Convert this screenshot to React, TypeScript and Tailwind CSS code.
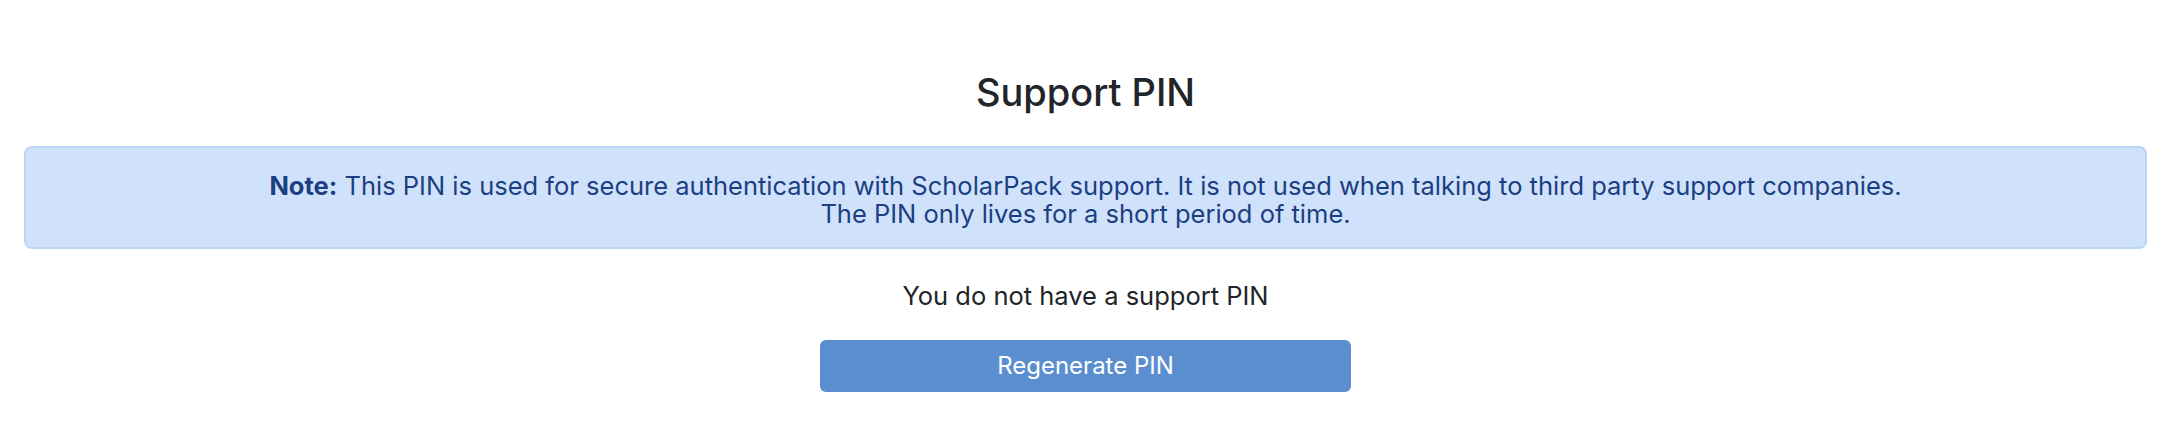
/**
 * Support PIN panel.
 * Shows an info note about the PIN and a button to regenerate it.
 */

export default function App() {
  return (
    <div
      className="min-h-[422px] bg-white pl-6 pr-[29px] pt-[70px] text-[#212529]"
      style={{ fontFamily: 'Inter, "Noto Sans", sans-serif' }}
    >
      <h3 className="text-center text-[38px] font-medium leading-[44px]">Support PIN</h3>

      {/* Note */}
      <div className="mt-8 rounded-lg border-2 border-[#bad5fa] bg-[#d0e2fb] pt-6 pb-[19px] text-center text-[25.5px] leading-[28px] text-[#1b3f80]">
        <strong className="font-bold">Note:</strong> This PIN is used for secure authentication with
        ScholarPack support. It is not used when talking to third party support companies.
        <br />
        The PIN only lives for a short period of time.
      </div>

      <p className="mt-[33px] text-center text-[25.5px] leading-[28px]">You do not have a support PIN</p>

      <button
        type="button"
        className="mx-auto mt-[30px] flex h-[52px] w-[531px] items-center justify-center rounded-md bg-[#5b8ecf] text-[24px] text-white"
      >
        Regenerate PIN
      </button>
    </div>
  );
}
